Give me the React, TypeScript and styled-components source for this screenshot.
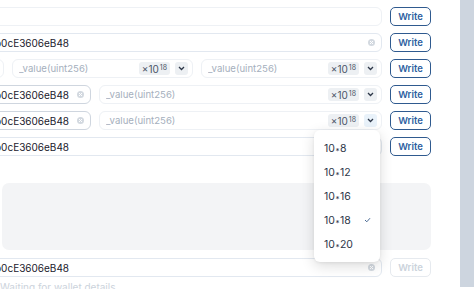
import React from "react";
import styled, { createGlobalStyle, css } from "styled-components";

const GlobalStyle = createGlobalStyle`
  html, body {
    margin: 0;
    padding: 0;
    background: #ffffff;
    overflow: hidden;
  }
  body {
    font-family: Inter, "Noto Sans", sans-serif;
    color: #1a202c;
  }
`;

const ADDRESS = "0xA0b86991c6218b36c1d19D4a2e9Eb0cE3606eB48";
const MULTIPLIERS = [8, 12, 16, 18, 20];

const Page = styled.div`
  display: flex;
  width: 474px;
  height: 289px;
  overflow: hidden;
`;

const Main = styled.div`
  flex: 1;
  overflow: hidden;
`;

const SidePanel = styled.div`
  width: 14px;
  height: 287px;
  background: #cdd5df;
`;

// the form is scrolled sideways, its left part is out of view
const Form = styled.div`
  width: 619px;
  margin-left: -188px;
  padding-top: 7px;
  display: flex;
  flex-direction: column;
  gap: 7px;
`;

const Row = styled.div`
  display: flex;
  gap: 8px;
  height: 19px;
`;

const Inputs = styled.div<{ $cols?: string }>`
  flex: 1;
  display: grid;
  grid-template-columns: ${(p) => p.$cols || "1fr"};
  gap: 8px;
`;

const Field = styled.div<{ $tone?: "light" | "normal" | "dark" }>`
  box-sizing: border-box;
  height: 19px;
  min-width: 0;
  display: flex;
  align-items: center;
  gap: 5px;
  padding: 0 4px 0 6px;
  border-radius: 6px;
  border: 1.5px solid
    ${(p) =>
      p.$tone === "dark" ? "#cfd6df" : p.$tone === "light" ? "#eef1f5" : "#e2e8f0"};
  background: #fff;
`;

const Value = styled.span<{ $placeholder?: boolean }>`
  flex: 1;
  min-width: 0;
  font-size: ${(p) => (p.$placeholder ? "9.6px" : "10px")};
  white-space: nowrap;
  overflow: hidden;
  color: ${(p) => (p.$placeholder ? "#a5afbd" : "#1a202c")};
`;

const Clear = styled.span`
  width: 7px;
  height: 7px;
  border-radius: 50%;
  background: #d3d9e0;
  margin-right: 2px;
  display: flex;
  align-items: center;
  justify-content: center;
`;

const Badge = styled.span`
  height: 13px;
  padding: 0 3px;
  border-radius: 3px;
  background: #edf0f3;
  color: #4a5568;
  font-size: 10px;
  display: flex;
  align-items: center;
  sup {
    font-size: 7px;
    margin-left: 1px;
    position: relative;
    top: -1px;
  }
`;

const Anchor = styled.div`
  position: relative;
`;

const Chevron = styled.span<{ $active?: boolean }>`
  width: 13px;
  height: 13px;
  border-radius: 3px;
  background: ${(p) => (p.$active ? "#e9f2fa" : "#edf0f3")};
  display: flex;
  align-items: center;
  justify-content: center;
`;

const WriteButton = styled.button<{ $disabled?: boolean }>`
  box-sizing: border-box;
  width: 41px;
  height: 19px;
  padding: 0;
  border-radius: 5px;
  background: #fff;
  font-family: Inter, sans-serif;
  font-size: 9.5px;
  font-weight: 600;
  ${(p) =>
    p.$disabled
      ? css`
          border: 1.5px solid #e6eaef;
          color: #cbd3dc;
        `
      : css`
          border: 1.5px solid #2f5a8f;
          color: #2d5f9f;
        `}
`;

const Result = styled.div`
  margin: 20px 0 1px 190px;
  height: 67px;
  border-radius: 7px;
  background: #f3f4f6;
`;

const Hint = styled.div`
  margin-left: 188px;
  margin-top: -3px;
  font-size: 10px;
  color: #ccd3dc;
  white-space: nowrap;
`;

const Menu = styled.div`
  position: absolute;
  top: calc(100% + 3px);
  right: -3px;
  width: 66px;
  padding: 6px 0;
  background: #fff;
  border-radius: 6px;
  box-shadow: 0 4px 14px rgba(0, 0, 0, 0.14), 0 1px 3px rgba(0, 0, 0, 0.06);
  z-index: 10;
`;

const MenuItem = styled.div`
  height: 24px;
  padding: 0 9px 0 10px;
  display: flex;
  align-items: center;
  justify-content: space-between;
  font-size: 10.5px;
  color: #2d3748;
`;

const Star = styled.span`
  font-size: 8px;
  position: relative;
  top: 2px;
  margin: 0 0.5px;
`;

const ClearIcon = () => (
  <Clear>
    <svg width="5" height="5" viewBox="0 0 5 5">
      <path d="M1 1l3 3M4 1L1 4" stroke="#fff" strokeWidth="1" />
    </svg>
  </Clear>
);

const ChevronIcon = () => (
  <svg width="7" height="5" viewBox="0 0 7 5">
    <path d="M1 1l2.5 2.5L6 1" fill="none" stroke="#2d3748" strokeWidth="1.3" />
  </svg>
);

const CheckIcon = () => (
  <svg width="7" height="6" viewBox="0 0 7 6">
    <path d="M1 3l1.8 1.8L6 1.2" fill="none" stroke="#4a6a94" strokeWidth="1" />
  </svg>
);

const Multiplier = ({ open }: { open?: boolean }) => (
  <>
    <Badge>
      ×10<sup>18</sup>
    </Badge>
    <Anchor>
      <Chevron $active={open}>
        <ChevronIcon />
      </Chevron>
      {open && (
        <Menu>
          {MULTIPLIERS.map((n) => (
            <MenuItem key={n}>
              <span>
                10<Star>*</Star>
                {n}
              </span>
              {n === 18 && <CheckIcon />}
            </MenuItem>
          ))}
        </Menu>
      )}
    </Anchor>
  </>
);

const AmountField = ({ open }: { open?: boolean }) => (
  <Field $tone="light">
    <Value $placeholder>_value(uint256)</Value>
    <Multiplier open={open} />
  </Field>
);

const AddressField = ({ clear, tone }: { clear?: boolean; tone?: "light" | "normal" | "dark" }) => (
  <Field $tone={tone}>
    <Value>{ADDRESS}</Value>
    {clear && <ClearIcon />}
  </Field>
);

export default function App() {
  return (
    <Page>
      <GlobalStyle />
      <Main>
        <Form>
          <Row>
            <Inputs>
              <Field $tone="light" />
            </Inputs>
            <WriteButton>Write</WriteButton>
          </Row>
          <Row>
            <Inputs>
              <AddressField clear />
            </Inputs>
            <WriteButton>Write</WriteButton>
          </Row>
          <Row>
            <Inputs $cols="1fr 181px 181px">
              <Field $tone="light" />
              <AmountField />
              <AmountField />
            </Inputs>
            <WriteButton>Write</WriteButton>
          </Row>
          <Row>
            <Inputs $cols="279px 1fr">
              <AddressField clear tone="dark" />
              <AmountField />
            </Inputs>
            <WriteButton>Write</WriteButton>
          </Row>
          <Row>
            <Inputs $cols="279px 1fr">
              <AddressField clear tone="dark" />
              <AmountField open />
            </Inputs>
            <WriteButton>Write</WriteButton>
          </Row>
          <Row>
            <Inputs>
              <AddressField />
            </Inputs>
            <WriteButton>Write</WriteButton>
          </Row>
          <Result />
          <Row>
            <Inputs>
              <AddressField clear />
            </Inputs>
            <WriteButton $disabled>Write</WriteButton>
          </Row>
          <Hint>Waiting for wallet details</Hint>
        </Form>
      </Main>
      <SidePanel />
    </Page>
  );
}
